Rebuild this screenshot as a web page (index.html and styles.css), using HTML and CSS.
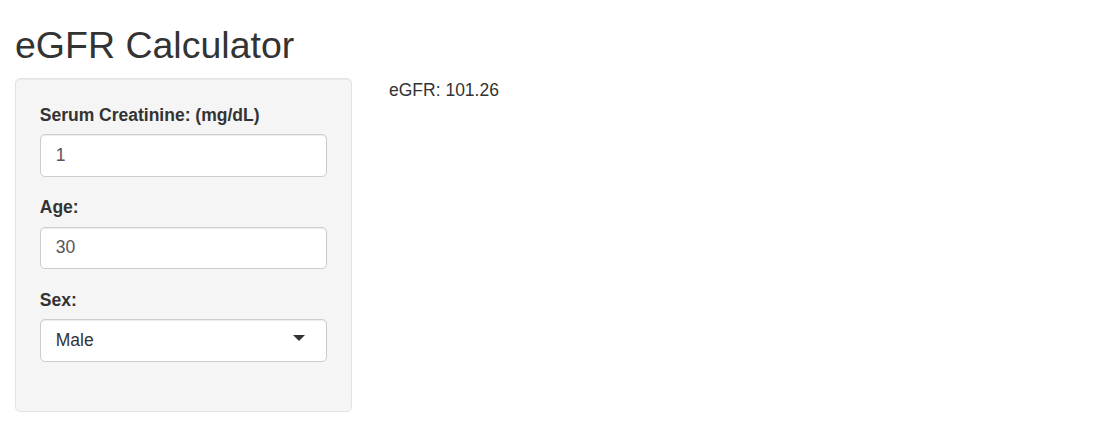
FILE: index.html
```html
<!DOCTYPE html>
<html>
<head>
<meta charset="utf-8">
<title>eGFR Calculator</title>
<link rel="stylesheet" href="styles.css">
</head>
<body>
<div class="page">
  <h2 class="title">eGFR Calculator</h2>
  <div class="layout">
    <div class="sidebar">
      <div class="well">
        <div class="form-group">
          <label class="control-label" for="scr">Serum Creatinine: (mg/dL)</label>
          <input class="form-control" id="scr" type="number" value="1">
        </div>
        <div class="form-group">
          <label class="control-label" for="age">Age:</label>
          <input class="form-control" id="age" type="number" value="30">
        </div>
        <div class="form-group form-group-select">
          <label class="control-label">Sex:</label>
          <div class="select-box">
            <span class="select-value">Male</span>
            <span class="caret"></span>
          </div>
        </div>
      </div>
    </div>
    <div class="main">
      <div class="output">eGFR: 101.26</div>
    </div>
  </div>
</div>
</body>
</html>
```
FILE: styles.css
```css
html, body {
  margin: 0;
  padding: 0;
  background: #fff;
}
body {
  font-family: "Liberation Sans", Arial, Helvetica, sans-serif;
  font-size: 17.5px;
  line-height: 25px;
  color: #333;
}
.page {
  padding: 0 15px;
}
.title {
  font-family: "Liberation Sans", Arial, Helvetica, sans-serif;
  font-weight: 500;
  font-size: 37.5px;
  line-height: 41.25px;
  margin: 25px 0 12px 0;
  color: #333;
}
.layout {
  display: flex;
  gap: 37px;
  align-items: flex-start;
}
.sidebar {
  width: 337px;
  flex: none;
}
.well {
  background: #f5f5f5;
  border: 1px solid #e3e3e3;
  border-radius: 5px;
  box-shadow: inset 0 1px 1px rgba(0,0,0,.05);
  padding: 23.5px 23.75px 30.5px 23.75px;
  min-height: 25px;
}
.form-group {
  margin-bottom: 18.75px;
}
.control-label {
  display: block;
  font-weight: bold;
  margin-bottom: 6.25px;
}
.form-control {
  display: block;
  box-sizing: border-box;
  width: 100%;
  height: 42.5px;
  padding: 7.5px 15px;
  font-family: inherit;
  font-size: 17.5px;
  line-height: 25px;
  color: #555;
  background: #fff;
  border: 1px solid #ccc;
  border-radius: 5px;
  box-shadow: inset 0 1px 1px rgba(0,0,0,.075);
  margin: 0;
  -moz-appearance: textfield;
}
.form-control::-webkit-outer-spin-button,
.form-control::-webkit-inner-spin-button {
  -webkit-appearance: none;
  margin: 0;
}
.select-box {
  position: relative;
  box-sizing: border-box;
  height: 42.5px;
  padding: 7.5px 15px;
  background: #fff;
  border: 1px solid #ccc;
  border-radius: 5px;
  box-shadow: inset 0 1px 1px rgba(0,0,0,.075);
  color: #333;
}
.caret {
  position: absolute;
  right: 21px;
  top: 15px;
  width: 0;
  height: 0;
  border-style: solid;
  border-width: 6px 6px 0 6px;
  border-color: #333 transparent transparent transparent;
}
.main {
  flex: 1;
}
.output {
  line-height: 25px;
}
```
